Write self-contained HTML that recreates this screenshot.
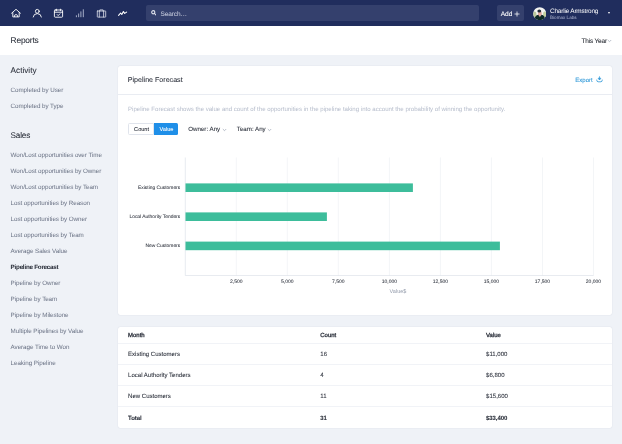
<!DOCTYPE html>
<html><head><meta charset="utf-8">
<style>
*{box-sizing:border-box;margin:0;padding:0}
html,body{width:622px;height:444px;overflow:hidden;background:#eff2f7;font-family:"Liberation Sans",sans-serif;color:#2b303b;text-rendering:geometricPrecision;-webkit-text-stroke:0.07px}
svg text{text-rendering:geometricPrecision;stroke-width:0.05px}
.abs{position:absolute}
#nav{position:absolute;left:0;top:0;width:622px;height:26.3px;background:#202d5d}
#search{position:absolute;left:146px;top:5.1px;width:333.4px;height:16.1px;background:#34406d;border-radius:2px}
#search span{position:absolute;left:14.5px;top:7.1px;font-size:6.5px;letter-spacing:-0.12px;color:#c3c8da}
#add{position:absolute;left:497.4px;top:5.1px;width:27px;height:16.1px;background:#34406d;border-radius:2px;color:#fff;font-size:6.6px}
#sub{position:absolute;left:0;top:26px;width:622px;height:28.5px;background:#fff}
.t{position:absolute;white-space:nowrap;line-height:1}
.side{font-size:6.25px;letter-spacing:-0.055px;color:#6f7789;left:10.6px;-webkit-text-stroke:0.03px}
.card{position:absolute;background:#fff;border-radius:2px;box-shadow:0 0 1px rgba(120,135,160,.35)}
.hl{position:absolute;height:0.6px;background:#e9ecf2}
#root{position:absolute;left:0;top:0;width:622px;height:444px;will-change:transform;background:#eff2f7;overflow:hidden}
</style></head><body><div id="root">
<div id="nav">
  <svg class="abs" style="left:0;top:0" width="146" height="26" viewBox="0 0 146 26" fill="none" stroke="#fff" stroke-width="0.9" stroke-linecap="round" stroke-linejoin="round">
    <!-- home -->
    <path d="M11.6 13.2 L16 9.3 L20.4 13.2 M12.8 12.6 V16.9 H19.2 V12.6 M14.6 16.6 V15.2 Q16 13.8 17.4 15.2 V16.6"/>
    <!-- person -->
    <circle cx="37.3" cy="11.3" r="1.9"/><path d="M33.2 17 Q33.6 13.6 37.3 13.6 Q41 13.6 41.4 17"/>
    <!-- calendar -->
    <rect x="54.4" y="10" width="8.2" height="7.2" rx="0.8"/><path d="M54.4 12.2 H62.6 M56.6 9.2 V10.6 M60.4 9.2 V10.6 M57.2 14.6 L58.2 15.6 L59.9 13.8"/>
    <!-- bars -->
    <g stroke="#adb4ce" stroke-width="0.95" stroke-linecap="butt"><path d="M76.4 15.3 V17.2 M78.65 13.5 V17.2 M80.9 11.4 V17.2 M83.3 9.3 V17.2"/></g>
    <!-- briefcase -->
    <g stroke="#dfe2ec" stroke-width="0.8"><rect x="97.3" y="11" width="8.4" height="6.1" rx="0.3"/><path d="M99.3 11 V17 M103.6 11 V17 M99.8 11 V9.9 H103.1 V11"/></g>
    <!-- trend -->
    <path stroke-width="1.1" d="M118.6 15.4 L120.6 13 L121.8 14.5 L123.4 11.6 L124.7 13.4 L126.6 12.1"/>
  </svg>
  <div id="search">
    <svg class="abs" style="left:4.5px;top:5.1px" width="5.9" height="5.9" viewBox="0 0 6 6" fill="none" stroke="#dde0ea" stroke-width="1.15"><circle cx="2.3" cy="2.3" r="1.6"/><path d="M3.5 3.5 L5.2 5.2" stroke-linecap="round"/></svg>
    <span class="t">Search…</span>
  </div>
  <div id="add"><span class="t" style="left:3.3px;top:7px">Add</span>
    <svg class="abs" style="left:17.1px;top:5.6px" width="6" height="6" viewBox="0 0 6 6" stroke="#fff" stroke-width="0.75"><path d="M3 0.5 V5.5 M0.5 3 H5.5"/></svg>
  </div>
  <svg class="abs" style="left:532.8px;top:6.7px" width="13.4" height="13.4" viewBox="0 0 13.4 13.4">
    <defs><clipPath id="av"><circle cx="6.7" cy="6.7" r="6.5"/></clipPath><filter id="bl" x="-20%" y="-20%" width="140%" height="140%"><feGaussianBlur stdDeviation="0.45"/></filter></defs>
    <g clip-path="url(#av)"><rect width="13.4" height="13.4" fill="#f3f4f1"/>
    <g filter="url(#bl)"><ellipse cx="1.6" cy="7.4" rx="1.8" ry="3" fill="#b9c79a"/><ellipse cx="11.8" cy="7.6" rx="1.7" ry="3" fill="#c3cf9e"/>
    <ellipse cx="6.9" cy="6.9" rx="1.9" ry="3.2" fill="#e2a9a0"/><ellipse cx="6.3" cy="3.9" rx="1.9" ry="1.5" fill="#1d2a35"/>
    <path d="M1.2 13.4 Q1.8 8.4 5.2 7.8 L6.9 10 L8.6 7.8 Q12 8.4 12.4 13.4 Z" fill="#0f2a27"/></g></g>
  </svg>
  <span class="t" style="left:550px;top:8.9px;font-size:6.4px;letter-spacing:-0.17px;color:#fff;-webkit-text-stroke:0">Charlie Armstrong</span>
  <span class="t" style="left:550px;top:16.2px;font-size:4.6px;color:#9aa2c0">Biomax Labs</span>
  <div class="abs" style="left:608.2px;top:12.1px;width:0;height:0;border-left:1.9px solid transparent;border-right:1.9px solid transparent;border-top:2.4px solid #fff"></div>
</div>
<div id="sub">
  <span class="t" style="left:10.6px;top:10.3px;font-size:8.4px;letter-spacing:-0.2px;color:#2b303b">Reports</span>
  <span class="t" style="left:581.6px;top:13px;font-size:6.5px;letter-spacing:-0.2px;color:#1f232b">This Year</span>
  <svg class="abs" style="left:607.2px;top:13.3px" width="5" height="4" viewBox="0 0 5 4" fill="none" stroke="#8a93a6" stroke-width="0.6"><path d="M0.8 1 L2.5 2.7 L4.2 1"/></svg>
</div>

<!-- sidebar -->
<span class="t" style="left:10.6px;top:66.6px;font-size:8.2px;color:#2b303b">Activity</span>
<span class="t side" style="top:87.95px">Completed by User</span>
<span class="t side" style="top:103.95px">Completed by Type</span>
<span class="t" style="left:10.6px;top:131.9px;font-size:8.2px;letter-spacing:-0.2px;color:#2b303b">Sales</span>
<span class="t side" style="top:153.35px">Won/Lost opportunities over Time</span>
<span class="t side" style="top:169.35px">Won/Lost opportunities by Owner</span>
<span class="t side" style="top:185.35px">Won/Lost opportunities by Team</span>
<span class="t side" style="top:201.35px">Lost opportunities by Reason</span>
<span class="t side" style="top:217.35px">Lost opportunities by Owner</span>
<span class="t side" style="top:233.35px">Lost opportunities by Team</span>
<span class="t side" style="top:249.35px">Average Sales Value</span>
<span class="t side" style="top:265.35px;font-weight:bold;color:#2b303b;letter-spacing:-0.23px">Pipeline Forecast</span>
<span class="t side" style="top:281.35px">Pipeline by Owner</span>
<span class="t side" style="top:297.35px">Pipeline by Team</span>
<span class="t side" style="top:313.35px">Pipeline by Milestone</span>
<span class="t side" style="top:329.35px">Multiple Pipelines by Value</span>
<span class="t side" style="top:345.35px">Average Time to Won</span>
<span class="t side" style="top:361.35px">Leaking Pipeline</span>

<!-- main card -->
<div class="card" style="left:118px;top:65.7px;width:494.2px;height:249.3px">
  <span class="t" style="left:9.8px;top:11.3px;font-size:7.1px;color:#2b303b">Pipeline Forecast</span>
  <span class="t" style="left:457.3px;top:12.3px;font-size:6.05px;color:#2e98d8">Export</span>
  <svg class="abs" style="left:478.2px;top:10px" width="7" height="7" viewBox="0 0 7 7" fill="none" stroke="#2e98d8" stroke-width="0.8" stroke-linecap="round" stroke-linejoin="round"><path d="M3.5 0.7 V3 M2.3 2.5 L3.5 4 L4.7 2.5 Z" fill="#2e98d8" stroke-width="0.7"/><path d="M0.7 4 Q0.7 5.8 2 5.8 H5 Q6.3 5.8 6.3 4"/></svg>
  <div class="hl" style="left:0;top:28.6px;width:494.2px"></div>
  <span class="t" style="left:10px;top:41.8px;font-size:6.09px;color:#b5bccb;-webkit-text-stroke:0">Pipeline Forecast shows the value and count of the opportunities in the pipeline taking into account the probability of winning the opportunity.</span>
  <div class="abs" style="left:10.4px;top:57px;width:25.6px;height:12.2px;border:0.5px solid #e0e4ec;border-radius:1.5px 0 0 1.5px;background:#fff"></div>
  <span class="t" style="left:16.1px;top:62px;font-size:5.6px;color:#2b303b">Count</span>
  <div class="abs" style="left:36px;top:57px;width:24.4px;height:12.2px;border-radius:0 1.5px 1.5px 0;background:#1f8fe8"></div>
  <span class="t" style="left:41.5px;top:62px;font-size:5.6px;color:#fff">Value</span>
  <span class="t" style="left:70.2px;top:61.4px;font-size:6.2px;color:#2b303b">Owner: Any</span>
  <span class="t" style="left:118.8px;top:61.4px;font-size:6.2px;color:#2b303b">Team: Any</span>
  <svg class="abs" style="left:103.9px;top:62.2px" width="5" height="4" viewBox="0 0 5 4" fill="none" stroke="#8a93a6" stroke-width="0.6"><path d="M0.8 1 L2.5 2.7 L4.2 1"/></svg>
  <svg class="abs" style="left:148.7px;top:62px" width="5" height="4" viewBox="0 0 5 4" fill="none" stroke="#8a93a6" stroke-width="0.6"><path d="M0.8 1 L2.5 2.7 L4.2 1"/></svg>

  <!-- chart -->
  <svg class="abs" style="left:0;top:84px" width="494" height="165" viewBox="0 0 494 165" font-family="Liberation Sans, sans-serif">
    <g stroke="#e7eaef" stroke-width="0.5">
      <path d="M118.3 7.5 V125.5 M169.3 7.5 V125.5 M220.3 7.5 V125.5 M271.4 7.5 V125.5 M322.4 7.5 V125.5 M373.4 7.5 V125.5 M424.5 7.5 V125.5 M475.5 7.5 V125.5"/>
    </g>
    <path d="M67.3 7.5 V125.5 H475.5" fill="none" stroke="#d5dae4" stroke-width="0.55"/>
    <rect x="67.5" y="33.4" width="227.4" height="8.6" fill="#3dbd9b"/>
    <rect x="67.5" y="62.4" width="141.4" height="8.6" fill="#3dbd9b"/>
    <rect x="67.5" y="91.6" width="314.4" height="8.6" fill="#3dbd9b"/>
    <g font-size="4.9" fill="#2b303b" stroke="#2b303b" text-anchor="end">
      <text x="62.2" y="38.9">Existing Customers</text>
      <text x="62.2" y="68">Local Authority Tenders</text>
      <text x="62.2" y="97.2">New Customers</text>
    </g>
    <g font-size="5" fill="#2b303b" stroke="#2b303b" text-anchor="middle">
      <text x="118.3" y="132.6">2,500</text>
      <text x="169.3" y="132.6">5,000</text>
      <text x="220.3" y="132.6">7,500</text>
      <text x="271.4" y="132.6">10,000</text>
      <text x="322.4" y="132.6">12,500</text>
      <text x="373.4" y="132.6">15,000</text>
      <text x="424.5" y="132.6">17,500</text>
      <text x="475.5" y="132.6">20,000</text>
    </g>
    <text x="271.6" y="142.6" font-size="5.5" fill="#939bab">Value$</text>
  </svg>
</div>

<!-- table card -->
<div class="card" style="left:118px;top:326.9px;width:494.2px;height:101px">
  <div class="hl" style="left:0;top:15.8px;width:494.2px;background:#f1f3f7"></div>
  <div class="hl" style="left:0;top:37.1px;width:494.2px;background:#f1f3f7"></div>
  <div class="hl" style="left:0;top:58.5px;width:494.2px;background:#f1f3f7"></div>
  <div class="hl" style="left:0;top:79.5px;width:494.2px;background:#f1f3f7"></div>
  <span class="t" style="left:10.1px;top:7.3px;font-size:6.02px;font-size:5.95px;-webkit-text-stroke:0.3px;">Month</span>
  <span class="t" style="left:202.3px;top:7.3px;font-size:6.02px;font-size:5.95px;-webkit-text-stroke:0.3px;">Count</span>
  <span class="t" style="left:368.1px;top:7.3px;font-size:6.02px;font-size:5.95px;-webkit-text-stroke:0.3px;">Value</span>
  <span class="t" style="left:10.1px;top:25.2px;font-size:6.02px;">Existing Customers</span>
  <span class="t" style="left:202.3px;top:25.2px;font-size:6.02px;">16</span>
  <span class="t" style="left:368.1px;top:25.2px;font-size:6.02px;">$11,000</span>
  <span class="t" style="left:10.1px;top:46.5px;font-size:6.02px;">Local Authority Tenders</span>
  <span class="t" style="left:202.3px;top:46.5px;font-size:6.02px;">4</span>
  <span class="t" style="left:368.1px;top:46.5px;font-size:6.02px;">$6,800</span>
  <span class="t" style="left:10.1px;top:67.4px;font-size:6.02px;">New Customers</span>
  <span class="t" style="left:202.3px;top:67.4px;font-size:6.02px;">11</span>
  <span class="t" style="left:368.1px;top:67.4px;font-size:6.02px;">$15,600</span>
  <span class="t" style="left:10.1px;top:88.7px;font-size:6.02px;font-weight:bold;letter-spacing:-0.1px;">Total</span>
  <span class="t" style="left:202.3px;top:88.7px;font-size:6.02px;font-weight:bold;letter-spacing:-0.1px;">31</span>
  <span class="t" style="left:368.1px;top:88.7px;font-size:6.02px;font-weight:bold;letter-spacing:-0.1px;">$33,400</span>
</div>
</div></body></html>
